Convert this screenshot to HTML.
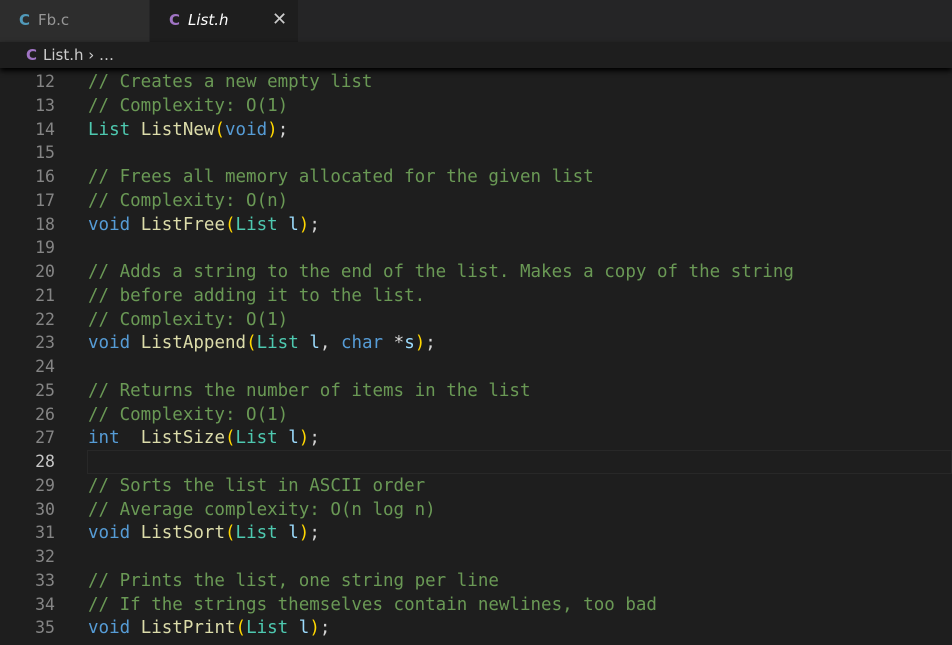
<!DOCTYPE html>
<html><head><style>
body{margin:0;width:952px;height:645px;background:#1e1e1e;overflow:hidden;font-family:"DejaVu Sans","Liberation Sans",sans-serif;}
.tabs{position:absolute;top:0;left:0;width:952px;height:42px;background:#252526;}
.tab{position:absolute;top:0;height:42px;line-height:40px;font-size:15px;}
.t1{left:0;width:149px;background:#2d2d2d;color:#969696;}
.t2{left:150px;width:148px;background:#1e1e1e;color:#fff;font-style:italic;}
.c{font-weight:bold;font-style:normal;font-size:15px;margin-right:8px;}
.bc{position:absolute;top:42px;left:0;width:952px;height:26px;background:#1e1e1e;box-shadow:0 3px 5px #000;color:#ccc;font-size:15px;line-height:26px;z-index:2;}
.code{position:absolute;top:70px;left:0;width:952px;font-family:"DejaVu Sans Mono",monospace;font-size:17.5px;}
.l{height:23.75px;line-height:23.75px;white-space:pre;position:relative;}
.n{display:inline-block;width:55px;text-align:right;color:#858585;margin-right:33px;font-size:16.5px;}
.cm{color:#6a9955}.k{color:#569cd6}.t{color:#4ec9b0}.f{color:#dcdcaa}.p{color:#ffd700}.v{color:#9cdcfe}.d{color:#d4d4d4}
.cur{position:absolute;left:87px;right:0;top:0;height:22px;border:1px solid #282828;}
</style></head><body>
<div class="tabs">
<div class="tab t1"><span style="margin-left:19px" class="c"><span style="color:#519aba">C</span></span>Fb.c</div>
<div class="tab t2"><span style="margin-left:19px" class="c"><span style="color:#a074c4">C</span></span>List.h<span style="position:absolute;left:122px;font-style:normal;font-size:18px;color:#ccc">✕</span></div>
</div>
<div class="bc"><span style="margin-left:26px;color:#a074c4;font-weight:bold;margin-right:6px">C</span>List.h › …</div>
<div class="code">
<div class="l"><span class="n">12</span><span class="cm">// Creates a new empty list</span></div>
<div class="l"><span class="n">13</span><span class="cm">// Complexity: O(1)</span></div>
<div class="l"><span class="n">14</span><span class="t">List</span> <span class="f">ListNew</span><span class="p">(</span><span class="k">void</span><span class="p">)</span><span class="d">;</span></div>
<div class="l"><span class="n">15</span></div>
<div class="l"><span class="n">16</span><span class="cm">// Frees all memory allocated for the given list</span></div>
<div class="l"><span class="n">17</span><span class="cm">// Complexity: O(n)</span></div>
<div class="l"><span class="n">18</span><span class="k">void</span> <span class="f">ListFree</span><span class="p">(</span><span class="t">List</span> <span class="v">l</span><span class="p">)</span><span class="d">;</span></div>
<div class="l"><span class="n">19</span></div>
<div class="l"><span class="n">20</span><span class="cm">// Adds a string to the end of the list. Makes a copy of the string</span></div>
<div class="l"><span class="n">21</span><span class="cm">// before adding it to the list.</span></div>
<div class="l"><span class="n">22</span><span class="cm">// Complexity: O(1)</span></div>
<div class="l"><span class="n">23</span><span class="k">void</span> <span class="f">ListAppend</span><span class="p">(</span><span class="t">List</span> <span class="v">l</span><span class="d">, </span><span class="k">char</span> <span class="d">*</span><span class="v">s</span><span class="p">)</span><span class="d">;</span></div>
<div class="l"><span class="n">24</span></div>
<div class="l"><span class="n">25</span><span class="cm">// Returns the number of items in the list</span></div>
<div class="l"><span class="n">26</span><span class="cm">// Complexity: O(1)</span></div>
<div class="l"><span class="n">27</span><span class="k">int</span>  <span class="f">ListSize</span><span class="p">(</span><span class="t">List</span> <span class="v">l</span><span class="p">)</span><span class="d">;</span></div>
<div class="l"><div class="cur"></div><span class="n" style="color:#c6c6c6">28</span></div>
<div class="l"><span class="n">29</span><span class="cm">// Sorts the list in ASCII order</span></div>
<div class="l"><span class="n">30</span><span class="cm">// Average complexity: O(n log n)</span></div>
<div class="l"><span class="n">31</span><span class="k">void</span> <span class="f">ListSort</span><span class="p">(</span><span class="t">List</span> <span class="v">l</span><span class="p">)</span><span class="d">;</span></div>
<div class="l"><span class="n">32</span></div>
<div class="l"><span class="n">33</span><span class="cm">// Prints the list, one string per line</span></div>
<div class="l"><span class="n">34</span><span class="cm">// If the strings themselves contain newlines, too bad</span></div>
<div class="l"><span class="n">35</span><span class="k">void</span> <span class="f">ListPrint</span><span class="p">(</span><span class="t">List</span> <span class="v">l</span><span class="p">)</span><span class="d">;</span></div>
</div>
</body></html>
